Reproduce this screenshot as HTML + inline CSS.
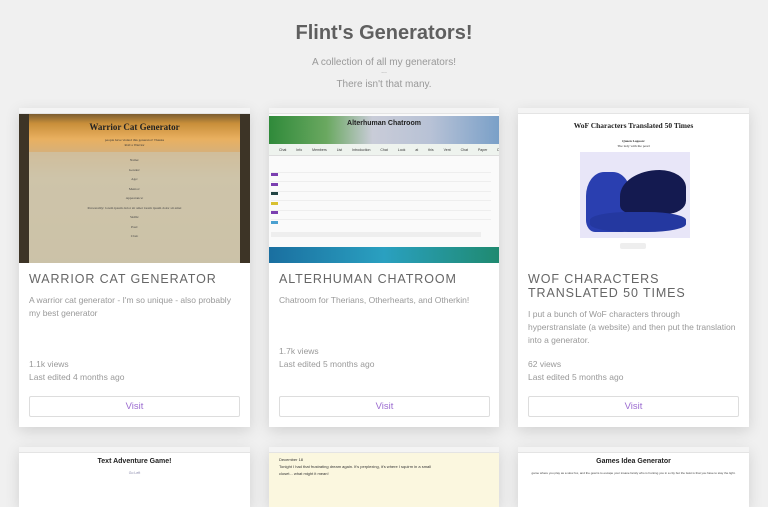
<!DOCTYPE html>
<html><head><meta charset="utf-8"><style>
*{margin:0;padding:0;box-sizing:border-box}
body{width:768px;height:480px;overflow:hidden;background:#f0f0f0;font-family:"Liberation Sans",sans-serif;position:relative}
h1{position:absolute;top:22px;left:0;width:768px;text-align:center;font-size:20px;color:#5f5f5f;font-weight:bold}
.sub{position:absolute;left:0;width:768px;text-align:center;font-size:10px;color:#999}
.card{position:absolute;background:#fff;box-shadow:0 4px 14px rgba(0,0,0,.13)}
.img{position:absolute;left:0;top:0;width:100%;height:155px;overflow:hidden}
.bar{position:absolute;left:0;top:0;width:100%;height:6px;background:#f4f4f4;border-bottom:1px solid #e4e4e4}
.t{position:absolute;left:10px;top:164px;font-size:12.5px;letter-spacing:0.9px;color:#666;line-height:14px;width:210px}
.d{position:absolute;left:10px;font-size:8.5px;color:#999;line-height:13px;width:212px}
.m{position:absolute;left:10px;top:250px;font-size:8.5px;color:#999;line-height:12.5px}
.btn{position:absolute;left:10px;top:288px;width:211px;height:21px;border:1px solid #ddd;border-radius:2px;text-align:center;font-size:9.5px;line-height:19px;color:#9b6bd0}
</style></head><body>
<h1>Flint's Generators!</h1>
<div class="sub" style="top:57px">A collection of all my generators!</div>
<div class="sub" style="top:68px;font-size:7px">...</div>
<div class="sub" style="top:79px">There isn't that many.</div>

<div class="card" style="left:19px;top:108px;width:231px;height:319px">
 <div class="img" style="background:linear-gradient(180deg,#4a3e2a 0%,#c98f3a 10%,#e9b060 20%,#d8b078 28%,#cfc5a8 45%,#c7bfa5 100%)">
  <div class="bar"></div>
  <div style="position:absolute;left:0;top:6px;width:10px;height:149px;background:#3d3426"></div>
  <div style="position:absolute;right:0;top:6px;width:10px;height:149px;background:#3d3426"></div>
  <div style="position:absolute;left:10px;top:44px;width:211px;height:111px;background:rgba(205,195,170,.7)"></div>
  <div style="position:absolute;top:14px;width:100%;text-align:center;font-family:'Liberation Serif',serif;font-weight:bold;font-size:9px;color:#222">Warrior Cat Generator</div>
  <div style="position:absolute;top:30px;width:100%;text-align:center;font-family:'Liberation Serif',serif;font-size:3.5px;color:#333;line-height:5px">people have visited this generator! Thanks<br>Roll a Warrior</div>
  <div style="position:absolute;top:48px;width:100%;text-align:center;font-family:'Liberation Serif',serif;font-size:3.5px;color:#444;line-height:9.5px">Name:<br>Gender:<br>Age:<br>Mentor:<br>Appearance:<br>Personality: lorem ipsum dolor sit amet lorem ipsum dolor sit amet<br>Skills:<br>Past:<br>Clan:</div>
 </div>
 <div class="t">WARRIOR CAT GENERATOR</div>
 <div class="d" style="top:186px">A warrior cat generator - I'm so unique - also probably my best generator</div>
 <div class="m">1.1k views<br>Last edited 4 months ago</div>
 <div class="btn">Visit</div>
</div>

<div class="card" style="left:269px;top:108px;width:230px;height:319px">
 <div class="img" style="background:#fafafa">
  <div class="bar"></div>
  <div style="position:absolute;left:0;top:8px;width:100%;height:28px;background:linear-gradient(90deg,#2f8a3a 0%,#6aa860 25%,#c9ccd8 45%,#b8c2d6 70%,#7aa0c8 100%)"></div>
  <div style="position:absolute;top:12px;width:100%;text-align:center;font-weight:bold;font-size:7px;color:#222">Alterhuman Chatroom</div>
  <div style="position:absolute;left:0;top:36px;width:100%;height:12px;background:#eef3ee;border-bottom:1px solid #ddd;font-size:3.5px;color:#333;white-space:nowrap;line-height:12px;word-spacing:9px">&nbsp;Chat Info Members&nbsp;List Introduction&nbsp;Chat Look&nbsp;at&nbsp;this Vent&nbsp;Chat Paper&nbsp;Discussion</div>
  <div style="position:absolute;left:2px;top:55px;width:220px">
   <div style="height:9.5px;border-bottom:1px solid #eee"><span style="display:inline-block;width:7px;height:3px;background:#7b3fb0"></span></div>
   <div style="height:9.5px;border-bottom:1px solid #eee"><span style="display:inline-block;width:7px;height:3px;background:#7b3fb0"></span></div>
   <div style="height:9.5px;border-bottom:1px solid #eee"><span style="display:inline-block;width:7px;height:3px;background:#244"></span></div>
   <div style="height:9.5px;border-bottom:1px solid #eee"><span style="display:inline-block;width:7px;height:3px;background:#d8c030"></span></div>
   <div style="height:9.5px;border-bottom:1px solid #eee"><span style="display:inline-block;width:7px;height:3px;background:#7b3fb0"></span></div>
   <div style="height:9.5px;border-bottom:1px solid #eee"><span style="display:inline-block;width:7px;height:3px;background:#4aa0d0"></span></div>
  </div>
  <div style="position:absolute;left:2px;top:124px;width:210px;height:5px;background:#eee"></div>
  <div style="position:absolute;left:0;top:139px;width:100%;height:16px;background:linear-gradient(90deg,#1a6fa0,#2aa0c0 50%,#1f8a70)"></div>
 </div>
 <div class="t">ALTERHUMAN CHATROOM</div>
 <div class="d" style="top:186px">Chatroom for Therians, Otherhearts, and Otherkin!</div>
 <div class="m" style="top:237px">1.7k views<br>Last edited 5 months ago</div>
 <div class="btn">Visit</div>
</div>

<div class="card" style="left:518px;top:108px;width:231px;height:319px">
 <div class="img" style="background:#fff">
  <div class="bar"></div>
  <div style="position:absolute;top:13px;width:100%;text-align:center;font-family:'Liberation Serif',serif;font-weight:bold;font-size:7.5px;color:#222">WoF Characters Translated 50 Times</div>
  <div style="position:absolute;top:31px;width:100%;text-align:center;font-family:'Liberation Serif',serif;font-size:3.5px;color:#333;line-height:5px"><b>Queen Lagoon:</b><br>The lady with the pearl</div>
  <div style="position:absolute;left:62px;top:44px;width:110px;height:86px;background:#e8e6f8">
   <div style="position:absolute;left:6px;top:20px;width:45px;height:60px;background:#2a3fb0;border-radius:40% 40% 20% 20%"></div>
   <div style="position:absolute;left:40px;top:18px;width:66px;height:44px;background:#141a50;border-radius:60% 40% 30% 20%"></div>
   <div style="position:absolute;left:10px;top:60px;width:96px;height:20px;background:#2438a0;border-radius:40%"></div>
  </div>
  <div style="position:absolute;left:102px;top:135px;width:26px;height:6px;background:#eee;border-radius:2px"></div>
 </div>
 <div class="t" style="line-height:14px">WOF CHARACTERS TRANSLATED 50 TIMES</div>
 <div class="d" style="top:200px">I put a bunch of WoF characters through hyperstranslate (a website) and then put the translation into a generator.</div>
 <div class="m">62 views<br>Last edited 5 months ago</div>
 <div class="btn">Visit</div>
</div>

<div class="card" style="left:19px;top:447px;width:231px;height:60px;background:#fff">
 <div class="bar"></div>
 <div style="position:absolute;top:11px;width:100%;text-align:center;font-weight:bold;font-size:7px;color:#222">Text Adventure Game!</div>
 <div style="position:absolute;top:24px;width:100%;text-align:center;font-size:3.5px;color:#88a">Go Left</div>
</div>
<div class="card" style="left:269px;top:447px;width:230px;height:60px;background:#fbf7df">
 <div class="bar"></div>
 <div style="position:absolute;left:10px;top:9px;font-size:4px;color:#333;line-height:7px">December 18<br>Tonight I had that frustrating dream again. It's perplexing, it's where I squirm in a small<br>closet... what might it mean!</div>
</div>
<div class="card" style="left:518px;top:447px;width:231px;height:60px;background:#fff">
 <div class="bar"></div>
 <div style="position:absolute;top:11px;width:100%;text-align:center;font-weight:bold;font-size:7px;color:#222">Games Idea Generator</div>
 <div style="position:absolute;left:4px;top:24px;width:223px;text-align:center;font-size:3px;color:#444">game where you play as a slow fox, and the goal is to escape your insane family who is hunting you in a city but the twist is that you have to stay the light.</div>
</div>
</body></html>
